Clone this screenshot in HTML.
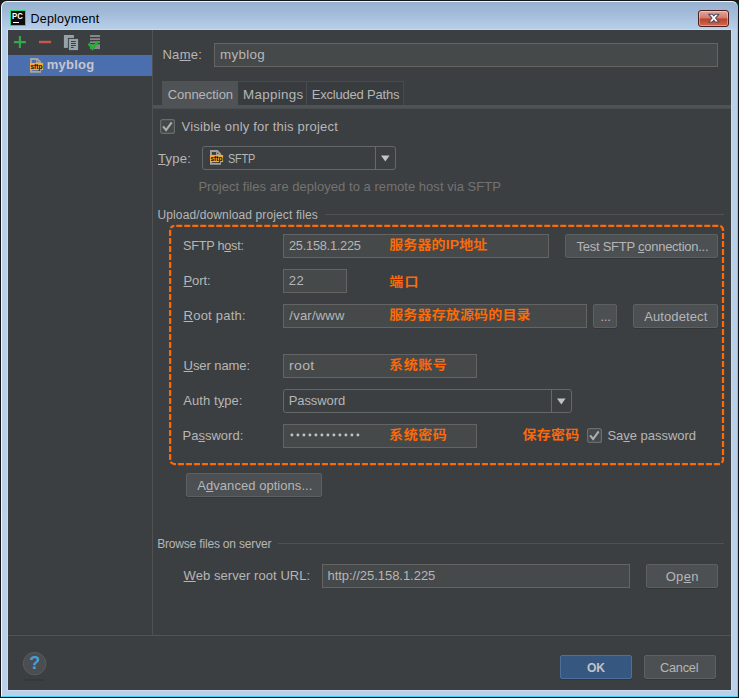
<!DOCTYPE html>
<html lang="zh-CN"><head><meta charset="utf-8"><title>Deployment</title>
<style>
html,body{margin:0;padding:0;}
body{width:739px;height:698px;overflow:hidden;background:#1c1c1c;font-family:"Liberation Sans", "Noto Sans CJK SC", sans-serif;font-size:13px;color:#b6b6b6;position:relative;}
.abs,.t,.inp,.btn,.combo,.csep,.ln,.blk{position:absolute;box-sizing:border-box;}
.t{white-space:nowrap;line-height:1;margin:0;padding:0;}
.t u{text-decoration:underline;text-decoration-thickness:1px;text-underline-offset:1px;}
.cj{font-family:"Liberation Sans","Noto Sans CJK SC",sans-serif;}
#win{position:absolute;left:0;top:0;width:739px;height:698px;box-sizing:border-box;border:1px solid #141414;border-radius:7px 7px 1px 1px;
 background:linear-gradient(#95b0cf 0px,#a2bbd9 12px,#b9d0e9 29px,#bbd0e9 100%);overflow:hidden;}
#win:before{content:"";position:absolute;left:0;top:0;right:0;bottom:0;border:1px solid rgba(255,255,255,.88);border-radius:6px 6px 0 0;border-bottom-color:#3fd3f4;border-right-color:#58d8f6;}
#client{position:absolute;left:8px;top:30px;width:723px;height:660px;background:#3c3f41;box-shadow:0 0 0 1px rgba(214,228,244,.55);}
.inp{background:#45494a;border:1px solid #646464;}
.btn{background:#4c5052;border:1px solid #5e6060;border-radius:2px;box-shadow:0 1px 0 rgba(0,0,0,.14);}
.btn.ok{background:#365880;border-color:#4c709c;}
.combo{background:#3c3f41;border:1px solid #666868;border-radius:3px;}
.csep{background:#686868;}
.ln{background:#515151;height:1px;}
</style></head><body>
<div id="win"></div>
<div id="client"></div>

<div class="blk" style="left:10px;top:10px;width:16px;height:16px;background:#0c0c0c;border:1px solid #21d789;"></div>
<div class="t" style="left:12.3px;top:11.9px;font-size:9.2px;font-weight:700;color:#fff;transform:scaleX(.85);transform-origin:0 0">PC</div>
<div class="blk" style="left:13.1px;top:21.7px;width:5.8px;height:1.2px;background:#fff"></div>
<div class="blk" style="left:698px;top:10px;width:31px;height:17px;border:1px solid #4a1f1c;border-radius:3px;
 background:linear-gradient(#e0a79d 0%,#d2796b 48%,#bd3f2b 52%,#cf6a50 100%);box-shadow:inset 0 0 0 1px rgba(255,255,255,.35);"></div>
<svg class="abs" style="left:706px;top:12px" width="16" height="13" viewBox="0 0 16 13"><path d="M2.6 2.2h3.8l1.4 1.8l1.4-1.8h3.8l-3.4 3.9l3.4 3.9h-3.8l-1.4-1.8l-1.4 1.8h-3.8l3.4-3.9z" fill="#fff" stroke="#4a4c5a" stroke-width="1.1" stroke-linejoin="round"/></svg>
<div class="blk" style="left:8px;top:55px;width:144px;height:21px;background:#4b6eaf;"></div>
<div class="blk" style="left:152px;top:30px;width:1px;height:605px;background:#4f5152;"></div>
<div class="blk" style="left:8px;top:635px;width:723px;height:1px;background:#525353;"></div>
<svg class="abs" style="left:8px;top:30px" width="100" height="25" viewBox="0 0 100 25">
<path d="M11.9 6.1v12M5.9 12.1h12" stroke="#35a84a" stroke-width="2.1" fill="none"/>
<path d="M31 12h12.1" stroke="#c9554f" stroke-width="2.4" fill="none"/>
<rect x="55.9" y="5" width="10" height="12.9" fill="#97a3ab"/>
<rect x="59.9" y="7.9" width="11" height="13" fill="#3c3f41"/>
<rect x="60.9" y="8.9" width="9.2" height="11.2" fill="#97a3ab"/>
<path d="M63 11.5h4.8M63 13.5h4.8M63 15.5h4.8M63 17.5h2.6" stroke="#3c3f41" stroke-width="1"/>
<rect x="82" y="5" width="10" height="14.1" fill="#858789"/>
<path d="M82 7.6h10M82 10.6h10M82 13.6h10" stroke="#3c3f41" stroke-width="1.1"/>
<path d="M80.6 13.4l3.9 5.2l5.6-7.4" stroke="#1fb32a" stroke-width="2.5" fill="none"/>
</svg>
<svg class="abs" style="left:29px;top:57px" width="15" height="16" viewBox="0 0 15 16">
<path d="M1.95 2.05h6.3l2.8 2.8v10.05h-9.1z" fill="none" stroke="#a9a59c" stroke-width="1.9" stroke-linejoin="miter"/>
<path d="M7.6 2.2v3.3h3.3" fill="none" stroke="#a9a59c" stroke-width="1.1"/>
<rect x="0.95" y="5.9" width="13.1" height="7.2" fill="#f7aa35"/>
<text x="1.4" y="11.5" font-family="Liberation Sans, sans-serif" font-size="7.3" font-weight="700" fill="#111" textLength="12.2" lengthAdjust="spacingAndGlyphs">sftp</text>
</svg>
<div class="blk" style="left:153px;top:105px;width:578px;height:4px;background:linear-gradient(#4f5355 0,#4f5355 70%,#45484a 100%);"></div>
<div class="blk" style="left:162px;top:81px;width:76px;height:25px;background:#4f5355;"></div>
<div class="blk" style="left:238px;top:81px;width:166px;height:24px;background:#393c3e;border:1px solid #494c4e;border-bottom:none;border-left:none;"></div>
<div class="blk" style="left:306px;top:82px;width:1px;height:23px;background:#494c4e;"></div>
<svg class="abs" style="left:160px;top:119px" width="16" height="16" viewBox="0 0 16 16"><rect x="0.6" y="0.6" width="13.8" height="13.8" rx="2" fill="#43494a" stroke="#6c6c6c" stroke-width="1.2"/><path d="M3.1 7.3l3 3.7l5.6-7.7" fill="none" stroke="#aeaeae" stroke-width="2.1"/></svg>
<svg class="abs" style="left:587px;top:428px" width="16" height="16" viewBox="0 0 16 16"><rect x="0.6" y="0.6" width="13.8" height="13.8" rx="2" fill="#43494a" stroke="#6c6c6c" stroke-width="1.2"/><path d="M3.1 7.3l3 3.7l5.6-7.7" fill="none" stroke="#aeaeae" stroke-width="2.1"/></svg>
<div class="ln" style="left:325px;top:214px;width:399px;height:1px;"></div>
<div class="ln" style="left:278px;top:543px;width:446px;height:1px;"></div>
<svg class="abs" style="left:165px;top:221px" width="564" height="248" viewBox="0 0 564 248"><rect x="5.1" y="4.8" width="552.9" height="238.2" rx="4.2" ry="4.2" fill="none" stroke="#fa6b08" stroke-width="2.25" stroke-dasharray="6 2" stroke-dashoffset="6"/></svg>
<div class="inp" style="left:214px;top:43px;width:504px;height:24px;"></div>
<div class="inp" style="left:283px;top:234px;width:266px;height:24px;"></div>
<div class="inp" style="left:283px;top:269px;width:64px;height:24px;"></div>
<div class="inp" style="left:283px;top:304px;width:304px;height:24px;"></div>
<div class="inp" style="left:283px;top:354px;width:194px;height:24px;"></div>
<div class="inp" style="left:283px;top:424px;width:194px;height:24px;"></div>
<div class="inp" style="left:322px;top:564px;width:308px;height:24px;"></div>
<div class="btn" style="left:565px;top:234px;width:153px;height:24px;"></div>
<div class="btn" style="left:593px;top:304px;width:24px;height:24px;"></div>
<div class="btn" style="left:633px;top:304px;width:85px;height:24px;"></div>
<div class="btn" style="left:186px;top:473px;width:136px;height:24px;"></div>
<div class="btn" style="left:646px;top:564px;width:72px;height:24px;"></div>
<div class="btn" style="left:644px;top:655px;width:72px;height:24px;"></div>
<div class="btn ok" style="left:560px;top:655px;width:72px;height:24px;"></div>
<div class="combo" style="left:202px;top:146px;width:194px;height:24px;"></div>
<div class="csep" style="left:375px;top:147px;width:1px;height:22px;"></div>
<div class="combo" style="left:283px;top:389px;width:289px;height:24px;"></div>
<div class="csep" style="left:551px;top:390px;width:1px;height:22px;"></div>
<svg class="abs" style="left:381px;top:155px" width="9" height="7"><path d="M0 0.5h8.6l-4.3 6z" fill="#c4c4c4"/></svg>
<svg class="abs" style="left:556.7px;top:398.3px" width="9" height="7"><path d="M0 0.4h8.6l-4.3 6.1z" fill="#c2c2c2"/></svg>
<svg class="abs" style="left:209px;top:149px" width="15" height="16" viewBox="0 0 15 16">
<path d="M1.95 2.05h6.3l2.8 2.8v10.05h-9.1z" fill="none" stroke="#a2a19c" stroke-width="1.9" stroke-linejoin="miter"/>
<path d="M7.6 2.2v3.3h3.3" fill="none" stroke="#a2a19c" stroke-width="1.1"/>
<rect x="0.95" y="5.9" width="13.1" height="7.2" fill="#f7aa35"/>
<text x="1.4" y="11.5" font-family="Liberation Sans, sans-serif" font-size="7.3" font-weight="700" fill="#111" textLength="12.2" lengthAdjust="spacingAndGlyphs">sftp</text>
</svg>
<svg class="abs" style="left:290px;top:432.9px" width="72" height="4"><circle cx="1.90" cy="2" r="1.45" fill="#c2c2c2"/><circle cx="7.90" cy="2" r="1.45" fill="#c2c2c2"/><circle cx="13.90" cy="2" r="1.45" fill="#c2c2c2"/><circle cx="19.90" cy="2" r="1.45" fill="#c2c2c2"/><circle cx="25.90" cy="2" r="1.45" fill="#c2c2c2"/><circle cx="31.90" cy="2" r="1.45" fill="#c2c2c2"/><circle cx="37.90" cy="2" r="1.45" fill="#c2c2c2"/><circle cx="43.90" cy="2" r="1.45" fill="#c2c2c2"/><circle cx="49.90" cy="2" r="1.45" fill="#c2c2c2"/><circle cx="55.90" cy="2" r="1.45" fill="#c2c2c2"/><circle cx="61.90" cy="2" r="1.45" fill="#c2c2c2"/><circle cx="67.90" cy="2" r="1.45" fill="#c2c2c2"/></svg>
<svg class="abs" style="left:21px;top:650px" width="28" height="32" viewBox="0 0 28 32"><path d="M2.5 30h21" stroke="#333638" stroke-width="1.2"/><circle cx="13.6" cy="13.6" r="11.3" fill="#4a4e50" stroke="#585c5e" stroke-width="1"/></svg>
<div class="t" style="left:29.3px;top:654.2px;font-size:18px;font-weight:700;color:#4b9ed1">?</div>
<div id="title" class="t" style="left:30.45px;top:12.72px;font-size:12.5px;color:#000;letter-spacing:0.231px;">Deployment</div>
<div id="rowname" class="t" style="left:46.77px;top:58.40px;font-size:13px;color:#c3c7cd;font-weight:700;letter-spacing:0.254px;">myblog</div>
<div id="lname" class="t" style="left:162.42px;top:48.30px;font-size:13px;color:#b6b6b6;letter-spacing:0.300px;">Na<u>m</u>e:</div>
<div id="vname" class="t" style="left:219.88px;top:48.30px;font-size:13px;color:#b6b6b6;letter-spacing:0.300px;transform:scaleX(1.0313);transform-origin:0 0;">myblog</div>
<div id="tab1" class="t" style="left:167.65px;top:87.70px;font-size:13px;color:#b6b6b6;letter-spacing:-0.034px;">Connection</div>
<div id="tab2" class="t" style="left:242.74px;top:87.70px;font-size:13px;color:#b6b6b6;letter-spacing:0.300px;transform:scaleX(1.0276);transform-origin:0 0;">Mappings</div>
<div id="tab3" class="t" style="left:311.74px;top:87.70px;font-size:13px;color:#b6b6b6;letter-spacing:-0.200px;">Excluded Paths</div>
<div id="vis" class="t" style="left:181.60px;top:119.70px;font-size:13px;color:#b6b6b6;letter-spacing:0.192px;">Visible only for this project</div>
<div id="ltype" class="t" style="left:158.00px;top:151.70px;font-size:13px;color:#b6b6b6;letter-spacing:0.241px;"><u>T</u>ype:</div>
<div id="vtype" class="t" style="left:227.56px;top:151.70px;font-size:13px;color:#b6b6b6;letter-spacing:-0.250px;transform:scaleX(0.8380);transform-origin:0 0;">SFTP</div>
<div id="hint" class="t" style="left:198.42px;top:180.20px;font-size:13px;color:#737373;letter-spacing:0.038px;">Project files are deployed to a remote host via SFTP</div>
<div id="sec1" class="t" style="left:157.45px;top:209.34px;font-size:12px;color:#b6b6b6;letter-spacing:0.127px;">Upload/download project files</div>
<div id="lhost" class="t" style="left:182.94px;top:239.00px;font-size:13px;color:#b6b6b6;letter-spacing:-0.250px;transform:scaleX(0.9748);transform-origin:0 0;">SFTP h<u>o</u>st:</div>
<div id="lport" class="t" style="left:183.52px;top:274.00px;font-size:13px;color:#b6b6b6;letter-spacing:-0.091px;"><u>P</u>ort:</div>
<div id="lroot" class="t" style="left:183.57px;top:309.00px;font-size:13px;color:#b6b6b6;letter-spacing:0.227px;"><u>R</u>oot path:</div>
<div id="luser" class="t" style="left:183.57px;top:359.00px;font-size:13px;color:#b6b6b6;letter-spacing:-0.080px;"><u>U</u>ser name:</div>
<div id="lauth" class="t" style="left:183.30px;top:394.00px;font-size:13px;color:#b6b6b6;letter-spacing:0.063px;">Auth t<u>y</u>pe:</div>
<div id="lpass" class="t" style="left:182.44px;top:429.00px;font-size:13px;color:#b6b6b6;letter-spacing:0.024px;">Pa<u>s</u>sword:</div>
<div id="vhost" class="t" style="left:289.10px;top:239.00px;font-size:13px;color:#b6b6b6;letter-spacing:-0.250px;transform:scaleX(0.9827);transform-origin:0 0;">25.158.1.225</div>
<div id="vport" class="t" style="left:288.86px;top:274.00px;font-size:13px;color:#b6b6b6;letter-spacing:0.496px;">22</div>
<div id="vroot" class="t" style="left:289.30px;top:309.00px;font-size:13px;color:#b6b6b6;letter-spacing:0.234px;">/var/www</div>
<div id="vuser" class="t" style="left:289.01px;top:359.00px;font-size:13px;color:#b6b6b6;letter-spacing:0.300px;transform:scaleX(1.0835);transform-origin:0 0;">root</div>
<div id="vauth" class="t" style="left:288.64px;top:394.00px;font-size:13px;color:#b6b6b6;letter-spacing:-0.058px;">Password</div>
<div id="btest" class="t" style="left:576.54px;top:239.80px;font-size:13px;color:#b6b6b6;letter-spacing:-0.261px;">Test SFTP <u>c</u>onnection...</div>
<div id="bdots" class="t" style="left:600.16px;top:309.80px;font-size:13px;color:#b6b6b6;letter-spacing:-0.064px;">...</div>
<div id="bauto" class="t" style="left:644.20px;top:309.80px;font-size:13px;color:#b6b6b6;letter-spacing:0.100px;">Autodetect</div>
<div id="savepw" class="t" style="left:607.47px;top:429.00px;font-size:13px;color:#b6b6b6;letter-spacing:-0.034px;">Sa<u>v</u>e password</div>
<div id="badv" class="t" style="left:197.30px;top:479.20px;font-size:13px;color:#b6b6b6;letter-spacing:0.045px;">A<u>d</u>vanced options...</div>
<div id="sec2" class="t" style="left:157.15px;top:538.34px;font-size:12px;color:#b6b6b6;letter-spacing:-0.176px;">Browse files on server</div>
<div id="lurl" class="t" style="left:183.57px;top:569.00px;font-size:13px;color:#b6b6b6;letter-spacing:0.062px;"><u>W</u>eb server root URL:</div>
<div id="vurl" class="t" style="left:327.49px;top:569.00px;font-size:13px;color:#b6b6b6;letter-spacing:-0.033px;">http://25.158.1.225</div>
<div id="bopen" class="t" style="left:665.70px;top:569.70px;font-size:13px;color:#b6b6b6;letter-spacing:0.301px;">Op<u>e</u>n</div>
<div id="bok" class="t" style="left:586.95px;top:660.90px;font-size:13px;color:#c0c4c8;font-weight:700;letter-spacing:-0.250px;transform:scaleX(0.9320);transform-origin:0 0;">OK</div>
<div id="bcancel" class="t" style="left:660.22px;top:660.90px;font-size:13px;color:#b6b6b6;letter-spacing:-0.250px;transform:scaleX(0.9828);transform-origin:0 0;">Cancel</div>
<div id="c1" class="t cj" style="left:389.22px;top:237.25px;font-size:14px;color:#fa6a08;font-weight:700;letter-spacing:0.117px;transform:scale(1.0000,0.9);transform-origin:0 11.85px;">服务器的IP地址</div>
<div id="c2" class="t cj" style="left:389.24px;top:273.85px;font-size:14px;color:#fa6a08;font-weight:700;letter-spacing:1.251px;transform:scale(1.0000,0.9);transform-origin:0 11.85px;">端口</div>
<div id="c3" class="t cj" style="left:389.22px;top:307.25px;font-size:14px;color:#fa6a08;font-weight:700;letter-spacing:0.147px;transform:scale(1.0000,0.9);transform-origin:0 11.85px;">服务器存放源码的目录</div>
<div id="c4" class="t cj" style="left:389.12px;top:357.25px;font-size:14px;color:#fa6a08;font-weight:700;letter-spacing:0.531px;transform:scale(1.0000,0.9);transform-origin:0 11.85px;">系统账号</div>
<div id="c5" class="t cj" style="left:389.12px;top:427.25px;font-size:14px;color:#fa6a08;font-weight:700;letter-spacing:0.530px;transform:scale(1.0000,0.9);transform-origin:0 11.85px;">系统密码</div>
<div id="c6" class="t cj" style="left:522.61px;top:427.25px;font-size:14px;color:#fa6a08;font-weight:700;letter-spacing:0.234px;transform:scale(1.0000,0.9);transform-origin:0 11.85px;">保存密码</div>
</body></html>
